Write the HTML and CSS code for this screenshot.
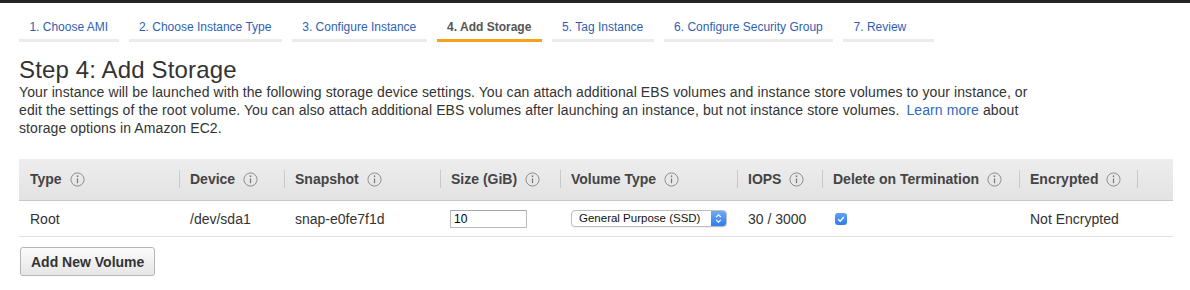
FILE: index.html
```html
<!DOCTYPE html>
<html>
<head>
<meta charset="utf-8">
<link rel="stylesheet" href="styles.css">
</head>
<body>
<div class="topbar"></div>
<nav class="tabs">
  <a class="tab">1. Choose AMI</a>
  <a class="tab">2. Choose Instance Type</a>
  <a class="tab">3. Configure Instance</a>
  <a class="tab active">4. Add Storage</a>
  <a class="tab">5. Tag Instance</a>
  <a class="tab">6. Configure Security Group</a>
  <a class="tab">7. Review</a>
</nav>
<main class="page">
  <h1 class="title">Step 4: Add Storage</h1>
  <p class="desc">Your instance will be launched with the following storage device settings. You can attach additional EBS volumes and instance store volumes to your instance, or edit the settings of the root volume. You can also attach additional EBS volumes after launching an instance, but not instance store volumes. <a class="link">Learn more</a> about storage options in Amazon EC2.</p>

  <table class="grid">
    <colgroup>
      <col class="c1"><col class="c2"><col class="c3"><col class="c4"><col class="c5"><col class="c6"><col class="c7"><col class="c8"><col class="c9">
    </colgroup>
    <thead>
      <tr>
        <th><div class="hd first">Type <svg class="info" viewBox="0 0 16 16"><circle cx="8" cy="8" r="7" /><line x1="8" y1="6.8" x2="8" y2="12" /><circle class="dot" cx="8" cy="4.4" r="0.9" /></svg></div></th>
        <th><div class="hd">Device <svg class="info" viewBox="0 0 16 16"><circle cx="8" cy="8" r="7" /><line x1="8" y1="6.8" x2="8" y2="12" /><circle class="dot" cx="8" cy="4.4" r="0.9" /></svg></div></th>
        <th><div class="hd">Snapshot <svg class="info" viewBox="0 0 16 16"><circle cx="8" cy="8" r="7" /><line x1="8" y1="6.8" x2="8" y2="12" /><circle class="dot" cx="8" cy="4.4" r="0.9" /></svg></div></th>
        <th><div class="hd">Size (GiB) <svg class="info" viewBox="0 0 16 16"><circle cx="8" cy="8" r="7" /><line x1="8" y1="6.8" x2="8" y2="12" /><circle class="dot" cx="8" cy="4.4" r="0.9" /></svg></div></th>
        <th><div class="hd">Volume Type <svg class="info" viewBox="0 0 16 16"><circle cx="8" cy="8" r="7" /><line x1="8" y1="6.8" x2="8" y2="12" /><circle class="dot" cx="8" cy="4.4" r="0.9" /></svg></div></th>
        <th><div class="hd">IOPS <svg class="info" viewBox="0 0 16 16"><circle cx="8" cy="8" r="7" /><line x1="8" y1="6.8" x2="8" y2="12" /><circle class="dot" cx="8" cy="4.4" r="0.9" /></svg></div></th>
        <th><div class="hd">Delete on Termination <svg class="info" viewBox="0 0 16 16"><circle cx="8" cy="8" r="7" /><line x1="8" y1="6.8" x2="8" y2="12" /><circle class="dot" cx="8" cy="4.4" r="0.9" /></svg></div></th>
        <th><div class="hd">Encrypted <svg class="info" viewBox="0 0 16 16"><circle cx="8" cy="8" r="7" /><line x1="8" y1="6.8" x2="8" y2="12" /><circle class="dot" cx="8" cy="4.4" r="0.9" /></svg></div></th>
        <th><div class="hd"></div></th>
      </tr>
    </thead>
    <tbody>
      <tr>
        <td>Root</td>
        <td>/dev/sda1</td>
        <td>snap-e0fe7f1d</td>
        <td><span class="field">10</span></td>
        <td>
          <span class="select"><span class="select-text">General Purpose (SSD)</span><span class="stepper"><svg viewBox="0 0 14 16"><path d="M4.5 6.5 L7 4 L9.5 6.5" /><path d="M4.5 9.5 L7 12 L9.5 9.5" /></svg></span></span>
        </td>
        <td>30 / 3000</td>
        <td><span class="check"><svg viewBox="0 0 12 12"><path d="M3.2 6.3 L5.1 8.2 L8.8 3.9" /></svg></span></td>
        <td>Not Encrypted</td>
        <td></td>
      </tr>
    </tbody>
  </table>

  <button class="btn">Add New Volume</button>
</main>
</body>
</html>
```

FILE: styles.css
```css
html, body {
  margin: 0;
  padding: 0;
  background: #ffffff;
}
body {
  font-family: "Liberation Sans", Arial, Helvetica, sans-serif;
  color: #333333;
}
.topbar {
  height: 3px;
  background: #242424;
}
.tabs {
  display: flex;
  gap: 10px;
  padding: 16px 19px 0 19px;
}
.tab {
  display: block;
  min-width: 70px;
  padding: 0 10.4px 3px 10.4px;
  font-size: 12px;
  line-height: 17px;
  color: #2e5fb4;
  border-bottom: 3px solid #ebebeb;
}
.tab.active {
  color: #555555;
  font-weight: bold;
  border-bottom-color: #f5a01f;
}
.page {
  padding: 14px 17px 0 19px;
}
.title {
  margin: 0;
  font-size: 24px;
  font-weight: normal;
  line-height: 27px;
  letter-spacing: 0.15px;
  color: #333333;
}
.desc {
  margin: 0;
  max-width: 1020px;
  font-size: 14px;
  line-height: 18px;
  letter-spacing: 0.09px;
  color: #333333;
}
.link {
  color: #2f68bd;
  margin-left: 3px;
}
.grid {
  margin-top: 22px;
  width: 1154px;
  table-layout: fixed;
  border-collapse: collapse;
  font-size: 14px;
}
.c1 { width: 160px; }
.c2 { width: 105px; }
.c3 { width: 156px; }
.c4 { width: 120px; }
.c5 { width: 177px; }
.c6 { width: 85px; }
.c7 { width: 197px; }
.c8 { width: 118px; }
.c9 { width: 36px; }
.grid thead tr {
  background: linear-gradient(#ededed, #e3e3e3);
}
.grid th {
  padding: 11px 0 12px 0;
  text-align: left;
  font-weight: bold;
  color: #444444;
  border-bottom: 1px solid #c8c8c8;
}
.hd {
  display: flex;
  align-items: center;
  gap: 8px;
  height: 18px;
  line-height: 18px;
  padding-left: 10px;
  border-left: 1px solid #c9c9c9;
  white-space: nowrap;
}
.hd.first {
  border-left: none;
  padding-left: 11px;
}
.info {
  width: 15px;
  height: 15px;
  flex: none;
}
.info circle {
  fill: none;
  stroke: #8a8a8a;
  stroke-width: 1;
}
.info line {
  stroke: #7a7a7a;
  stroke-width: 1.3;
}
.info .dot {
  fill: #7a7a7a;
  stroke: none;
}
.grid td {
  height: 35px;
  padding: 0 0 0 11px;
  vertical-align: middle;
  color: #333333;
  border-bottom: 1px solid #e1e1e1;
  white-space: nowrap;
}
.field {
  display: block;
  width: 72px;
  height: 16px;
  border: 1px solid #bcbcbc;
  border-top-color: #a6a6a6;
  padding: 0 0 0 3px;
  margin-left: -1px;
  font-size: 12px;
  line-height: 16px;
  color: #000000;
  background: #ffffff;
}
.select {
  display: flex;
  align-items: stretch;
  width: 156px;
  height: 17px;
  box-sizing: border-box;
  border: 1px solid #bdbdbd;
  border-radius: 4px;
  background: #ffffff;
  box-shadow: 0 1px 1px rgba(0,0,0,0.06);
  overflow: hidden;
}
.select-text {
  flex: 1;
  padding-left: 7px;
  font-size: 11.5px;
  line-height: 15px;
  color: #111111;
}
.stepper {
  width: 15px;
  background: linear-gradient(#6eaaf8, #2f7def);
  display: flex;
  align-items: center;
  justify-content: center;
}
.stepper svg {
  width: 13px;
  height: 15px;
}
.stepper path {
  fill: none;
  stroke: #ffffff;
  stroke-width: 1.3;
}
.check {
  display: block;
  width: 12px;
  height: 12px;
  margin-left: 2px;
  border-radius: 3px;
  background: linear-gradient(#5fa0f7, #2f7bee);
}
.check svg {
  display: block;
  width: 12px;
  height: 12px;
}
.check path {
  fill: none;
  stroke: #ffffff;
  stroke-width: 1.5;
}
.btn {
  display: block;
  margin-top: 10px;
  margin-left: 1px;
  height: 29px;
  padding: 0 10px;
  border: 1px solid #b6b6b6;
  border-radius: 3px;
  background: linear-gradient(#fbfbfb, #e6e6e6);
  box-shadow: 0 1px 1px rgba(0,0,0,0.08);
  font-family: "Liberation Sans", Arial, Helvetica, sans-serif;
  font-size: 14px;
  font-weight: bold;
  color: #333333;
}
```
